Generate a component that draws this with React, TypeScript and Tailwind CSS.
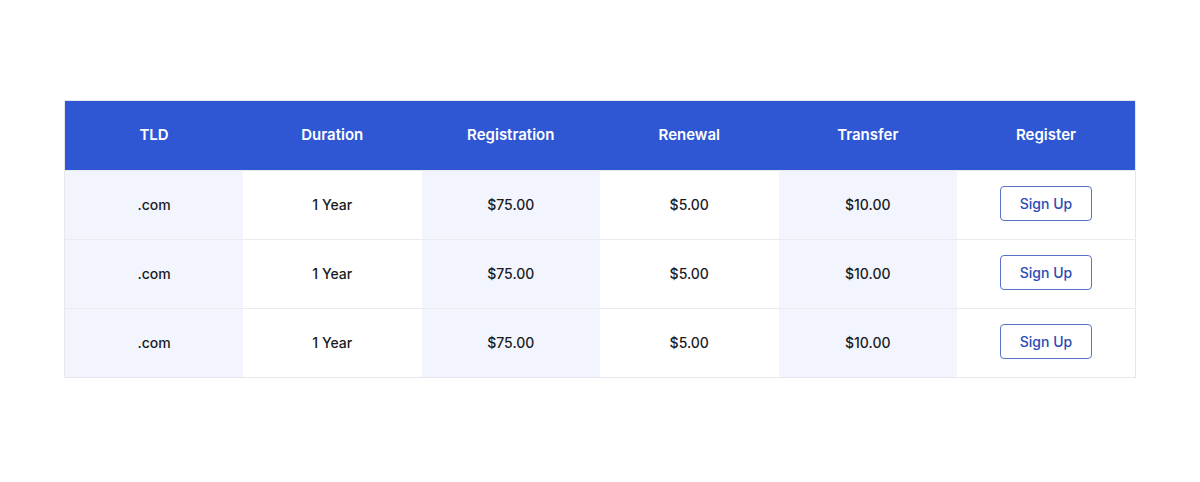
const rows = [
  { tld: ".com", duration: "1 Year", registration: "$75.00", renewal: "$5.00", transfer: "$10.00" },
  { tld: ".com", duration: "1 Year", registration: "$75.00", renewal: "$5.00", transfer: "$10.00" },
  { tld: ".com", duration: "1 Year", registration: "$75.00", renewal: "$5.00", transfer: "$10.00" },
];

const headers = ["TLD", "Duration", "Registration", "Renewal", "Transfer", "Register"];

export default function App() {
  return (
    <main className="bg-white w-[1200px] h-[482px] pt-[100px] px-[64px] font-['Inter',sans-serif]">
      <table className="w-full table-fixed border-collapse border border-[#e5e7eb]">
        <thead>
          <tr className="bg-[#2f57d3] h-[70px]">
            {headers.map((h) => (
              <th key={h} className="text-white text-[15px] font-semibold text-center">
                {h}
              </th>
            ))}
          </tr>
        </thead>
        <tbody>
          {rows.map((r, i) => (
            <tr key={i} className="h-[69px] border-t border-[#e9ebef] text-[14px] font-medium text-[#1b1b1f] text-center">
              <td className="bg-[#f2f5fd] pb-[2px]">{r.tld}</td>
              <td className="bg-white pb-[2px]">{r.duration}</td>
              <td className="bg-[#f2f5fd] pb-[2px]">{r.registration}</td>
              <td className="bg-white pb-[2px]">{r.renewal}</td>
              <td className="bg-[#f2f5fd] pb-[2px]">{r.transfer}</td>
              <td className="bg-white pb-[3px]">
                <button className="w-[92px] h-[35px] border border-[#5a72c4] rounded-[4px] text-[14px] font-medium text-[#2b4bb5]">
                  Sign Up
                </button>
              </td>
            </tr>
          ))}
        </tbody>
      </table>
    </main>
  );
}
